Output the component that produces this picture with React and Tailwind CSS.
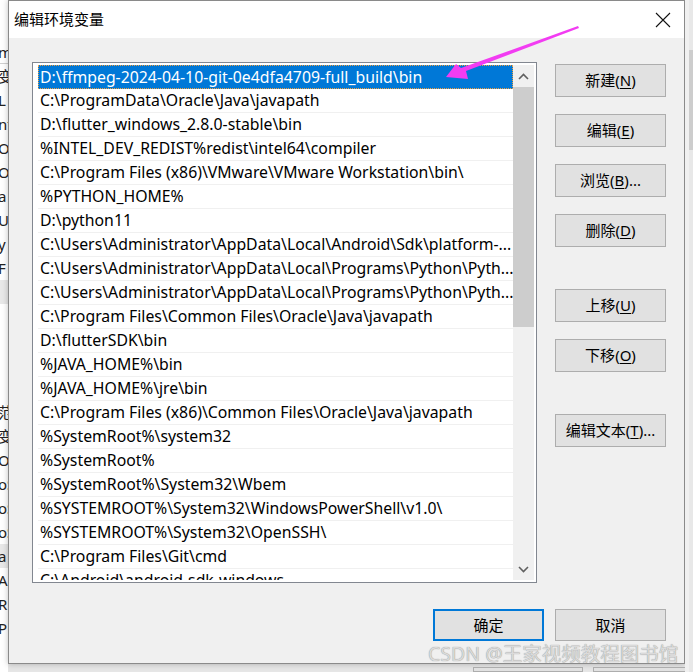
import React from 'react';

const paths = [
  'D:\\ffmpeg-2024-04-10-git-0e4dfa4709-full_build\\bin',
  'C:\\ProgramData\\Oracle\\Java\\javapath',
  'D:\\flutter_windows_2.8.0-stable\\bin',
  '%INTEL_DEV_REDIST%redist\\intel64\\compiler',
  'C:\\Program Files (x86)\\VMware\\VMware Workstation\\bin\\',
  '%PYTHON_HOME%',
  'D:\\python11',
  'C:\\Users\\Administrator\\AppData\\Local\\Android\\Sdk\\platform-...',
  'C:\\Users\\Administrator\\AppData\\Local\\Programs\\Python\\Pyth...',
  'C:\\Users\\Administrator\\AppData\\Local\\Programs\\Python\\Pyth...',
  'C:\\Program Files\\Common Files\\Oracle\\Java\\javapath',
  'D:\\flutterSDK\\bin',
  '%JAVA_HOME%\\bin',
  '%JAVA_HOME%\\jre\\bin',
  'C:\\Program Files (x86)\\Common Files\\Oracle\\Java\\javapath',
  '%SystemRoot%\\system32',
  '%SystemRoot%',
  '%SystemRoot%\\System32\\Wbem',
  '%SYSTEMROOT%\\System32\\WindowsPowerShell\\v1.0\\',
  '%SYSTEMROOT%\\System32\\OpenSSH\\',
  'C:\\Program Files\\Git\\cmd',
  'C:\\Android\\android-sdk-windows',
];

// fragments of the window behind the dialog, cut at its left edge
const behindLeft = ['m', '变', 'L', 'nt', 'Or', 'Or', 'a', 'U', 'y', 'F', '', '', '', '', '', '范', '变', 'Op', 'oS', 'oS', 'oS', 'a', 'A', 'R', 'P'];

function Btn({ label, mnemonic, tail = '' }) {
  return (
    <button className="w-[111px] h-[33px] bg-[#e1e1e1] border border-[#adadad] text-[15px] text-black flex items-center justify-center">
      {label}(<span className="underline underline-offset-2">{mnemonic}</span>){tail}
    </button>
  );
}

export default function App() {
  return (
    <div
      className="relative w-[693px] h-[672px] overflow-hidden bg-[#e6e6e6] flex"
      style={{ fontFamily: '"Noto Sans", "Noto Sans CJK SC", sans-serif' }}
    >
      {/* left strip of window behind */}
      <div className="w-[8px] shrink-0 h-full bg-white flex flex-col overflow-hidden text-[15px] text-[#222]">
        <div className="h-[40px] bg-white" />
        {behindLeft.map((t, i) => (
          <div key={i} className={`h-[24px] leading-[24px] whitespace-nowrap -ml-[2px] ${i === 0 ? 'border-b border-[#d0d0d0]' : ''} ${i === 10 || i === 21 ? 'bg-[#e8e8e8]' : ''}`}>
            {t}
          </div>
        ))}
      </div>

      <div className="w-[677px] shrink-0 flex flex-col">
        {/* dialog */}
        <div className="w-[677px] h-[664px] border border-[#8a8a8a] flex flex-col bg-[#f0f0f0] shadow-[0_0_6px_rgba(0,0,0,0.25)]">
          <div className="h-[37px] bg-white flex items-center justify-between pl-[5px] pr-[13px]">
            <span className="text-[15px] text-black" style={{ fontFamily: '"Noto Sans CJK SC", sans-serif' }}>编辑环境变量</span>
            <svg width="16" height="16" viewBox="0 0 16 16" className="mt-[1px]">
              <path d="M1 1 L15 15 M15 1 L1 15" stroke="#111" strokeWidth="1.1" />
            </svg>
          </div>

          <div className="flex-1 flex flex-col pt-[24px] pl-[23px]">
            <div className="flex gap-[18px]">
              {/* list box */}
              <div className="w-[505px] h-[521px] bg-white border border-[#828790] flex pt-[2px] pl-[5px] pr-[2px] pb-[2px]">
                <div className="w-[475px] flex flex-col overflow-hidden">
                  {paths.map((p, i) => (
                    <div
                      key={i}
                      className={`h-[24px] shrink-0 flex items-center pl-[2px] pt-[1px] whitespace-nowrap text-[15.8px] ${
                        i === 0
                          ? 'bg-[#0078d7] text-white outline-1 outline-dotted outline-[#f0a040] -outline-offset-1'
                          : 'text-black border-b border-[#f0f0f0]'
                      }`}
                    >
                      {p}
                    </div>
                  ))}
                </div>
                <div className="w-[21px] flex flex-col bg-[#f0f0f0]">
                  <div className="h-[22px] flex items-center justify-center">
                    <svg width="11" height="7" viewBox="0 0 11 7">
                      <path d="M1 6 L5.5 1.5 L10 6" fill="none" stroke="#606060" strokeWidth="1.6" />
                    </svg>
                  </div>
                  <div className="h-[240px] bg-[#cdcdcd]" />
                  <div className="flex-1" />
                  <div className="h-[22px] flex items-center justify-center">
                    <svg width="11" height="7" viewBox="0 0 11 7">
                      <path d="M1 1 L5.5 5.5 L10 1" fill="none" stroke="#606060" strokeWidth="1.6" />
                    </svg>
                  </div>
                </div>
              </div>

              {/* side buttons */}
              <div className="flex flex-col pt-[2px]">
                <Btn label="新建" mnemonic="N" />
                <div className="h-[17px]" />
                <Btn label="编辑" mnemonic="E" />
                <div className="h-[17px]" />
                <Btn label="浏览" mnemonic="B" tail="..." />
                <div className="h-[17px]" />
                <Btn label="删除" mnemonic="D" />
                <div className="h-[42px]" />
                <Btn label="上移" mnemonic="U" />
                <div className="h-[17px]" />
                <Btn label="下移" mnemonic="O" />
                <div className="h-[42px]" />
                <Btn label="编辑文本" mnemonic="T" tail="..." />
              </div>
            </div>

            <div className="flex justify-end gap-[11px] pr-[18px] mt-[26px]">
              <button className="w-[111px] h-[32px] bg-[#e1e1e1] border-2 border-[#0078d7] text-[15px] text-black">确定</button>
              <button className="w-[111px] h-[32px] bg-[#e1e1e1] border border-[#adadad] text-[15px] text-black">取消</button>
            </div>
          </div>
        </div>
        <div className="flex-1 flex gap-[10px] pl-[465px] pt-[3px] overflow-hidden">
          <div className="w-[110px] shrink-0 border border-[#adadad] bg-[#e1e1e1]" />
          <div className="w-[110px] shrink-0 border border-[#adadad] bg-[#e1e1e1]" />
        </div>
      </div>

      {/* right strip of window behind */}
      <div className="flex-1 h-full bg-[#f0f0f0] flex">
        <div className="w-[4px] h-full" />
        <div className="w-[4px] h-full flex flex-col bg-[#e8e8e8]">
          <div className="h-[50px]" />
          <div className="h-[100px] bg-[#cdcdcd]" />
          <div className="flex-1" />
        </div>
      </div>

      {/* annotation arrow */}
      <svg className="absolute left-0 top-0 pointer-events-none" width="693" height="672" viewBox="0 0 693 672">
        <polygon points="578,26 579,28 466,71 468,79 446,77 456,64 461,68" fill="#f23cf2" />
      </svg>

      {/* watermark */}
      <div
        className="absolute left-[428px] top-[639px] text-[19.5px] text-[#dadada] whitespace-nowrap [text-shadow:0_0_1px_#808080]"
        style={{ fontFamily: '"Noto Sans", "Noto Sans CJK SC", sans-serif' }}
      >
        CSDN @王家视频教程图书馆
      </div>
    </div>
  );
}
